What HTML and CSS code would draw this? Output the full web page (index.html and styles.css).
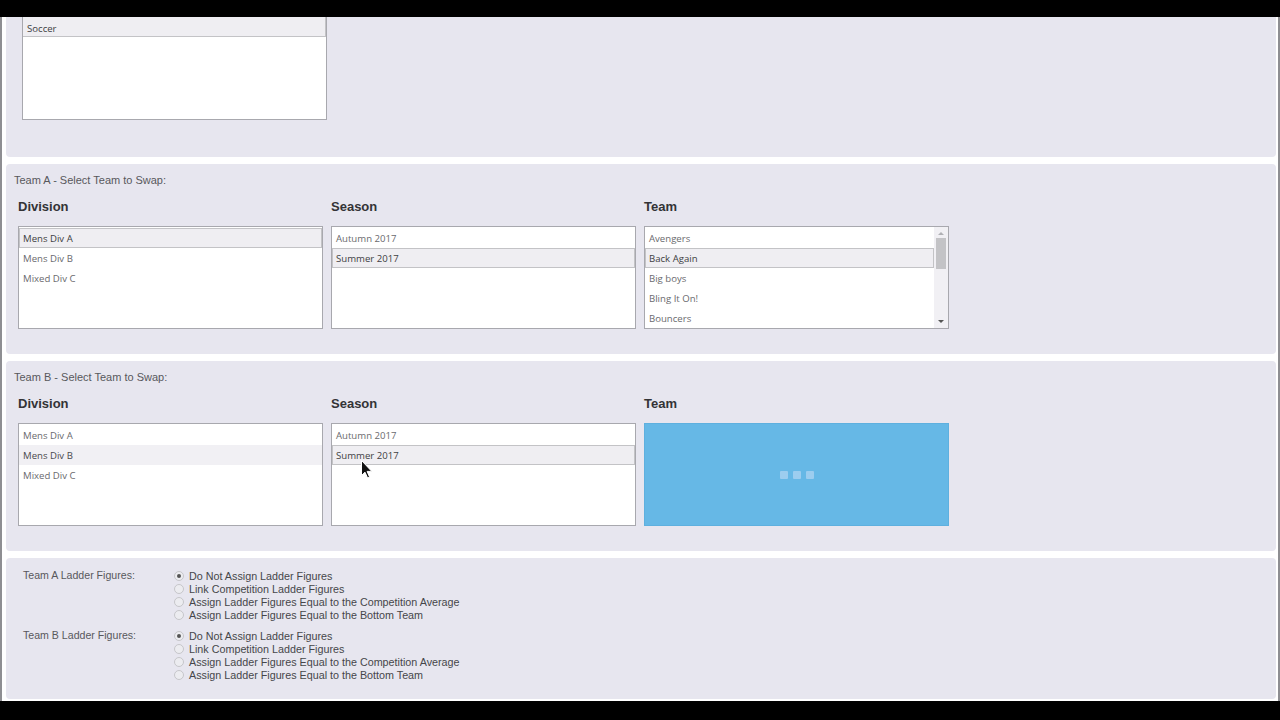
FILE: index.html
```html
<!DOCTYPE html>
<html>
<head>
<meta charset="utf-8">
<link rel="stylesheet" href="styles.css">
</head>
<body>
<div class="topbar"></div>
<div class="frame">
  <section class="panel p-sport">
    <div class="listbox lb-sport">
      <div class="item sel">Soccer</div>
    </div>
  </section>

  <section class="panel p-swap">
    <div class="label">Team A - Select Team to Swap:</div>
    <div class="cols">
      <div class="col">
        <h3>Division</h3>
        <div class="listbox">
          <div class="item sel">Mens Div A</div>
          <div class="item">Mens Div B</div>
          <div class="item">Mixed Div C</div>
        </div>
      </div>
      <div class="col">
        <h3>Season</h3>
        <div class="listbox">
          <div class="item">Autumn 2017</div>
          <div class="item sel">Summer 2017</div>
        </div>
      </div>
      <div class="col">
        <h3>Team</h3>
        <div class="listbox scroll">
          <div class="items">
            <div class="item">Avengers</div>
            <div class="item sel">Back Again</div>
            <div class="item">Big boys</div>
            <div class="item">Bling It On!</div>
            <div class="item">Bouncers</div>
          </div>
          <div class="scrollbar">
            <span class="arrow up"></span>
            <span class="thumb"></span>
            <span class="arrow down"></span>
          </div>
        </div>
      </div>
    </div>
  </section>

  <section class="panel p-swap">
    <div class="label">Team B - Select Team to Swap:</div>
    <div class="cols">
      <div class="col">
        <h3>Division</h3>
        <div class="listbox">
          <div class="item">Mens Div A</div>
          <div class="item hover">Mens Div B</div>
          <div class="item">Mixed Div C</div>
        </div>
      </div>
      <div class="col">
        <h3>Season</h3>
        <div class="listbox cursor-host">
          <div class="item">Autumn 2017</div>
          <div class="item sel">Summer 2017</div>
          <svg class="cursor" width="12" height="19" viewBox="0 0 12 19"><path d="M0.5 0.5 L0.5 15.5 L4 12.2 L6.6 18 L8.6 17.1 L6.1 11.4 L10.8 11.4 Z" fill="#111" stroke="#fff" stroke-width="1"/></svg>
        </div>
      </div>
      <div class="col">
        <h3>Team</h3>
        <div class="loading">
          <span class="dot"></span><span class="dot"></span><span class="dot"></span>
        </div>
      </div>
    </div>
  </section>

  <section class="panel p-ladder">
    <div class="ladder-row">
      <div class="ladder-label">Team A Ladder Figures:</div>
      <div class="radios">
        <div class="radio"><span class="circle on"></span>Do Not Assign Ladder Figures</div>
        <div class="radio"><span class="circle"></span>Link Competition Ladder Figures</div>
        <div class="radio"><span class="circle"></span>Assign Ladder Figures Equal to the Competition Average</div>
        <div class="radio"><span class="circle"></span>Assign Ladder Figures Equal to the Bottom Team</div>
      </div>
    </div>
    <div class="ladder-row">
      <div class="ladder-label">Team B Ladder Figures:</div>
      <div class="radios">
        <div class="radio"><span class="circle on"></span>Do Not Assign Ladder Figures</div>
        <div class="radio"><span class="circle"></span>Link Competition Ladder Figures</div>
        <div class="radio"><span class="circle"></span>Assign Ladder Figures Equal to the Competition Average</div>
        <div class="radio"><span class="circle"></span>Assign Ladder Figures Equal to the Bottom Team</div>
      </div>
    </div>
  </section>
</div>
</body>
</html>
```

FILE: styles.css
```css
* { box-sizing: border-box; }
html, body {
  margin: 0;
  padding: 0;
  height: 720px;
  overflow: hidden;
  background: #000;
  font-family: "Liberation Sans", Arial, sans-serif;
}
.topbar { height: 17px; background: #000; }
.frame {
  background: #fff;
  border-left: 2px solid #8e8e92;
  border-right: 2px solid #8e8e92;
  padding: 0 2px 2px 4px;
  display: flex;
  flex-direction: column;
  gap: 7px;
}
.panel {
  background: #e7e6ef;
  border-radius: 4px;
}
.p-sport {
  height: 140px;
  padding-left: 16px;
  border-radius: 0 0 4px 4px;
}
.listbox {
  background: #fff;
  border: 1px solid #a8a8ae;
  height: 103px;
  width: 305px;
  padding-top: 1px;
  position: relative;
}
.lb-sport {
  border-top: none;
  padding-top: 0;
}
.item {
  height: 20px;
  line-height: 19px;
  padding-left: 3px;
  font-family: "Open Sans", "Noto Sans", sans-serif;
  font-size: 9.6px;
  color: #6a6a6e;
  border: 1px solid transparent;
}
.item.sel {
  background: #efeef2;
  border-color: #c3c3c6;
  color: #3e3e42;
}
.item.hover {
  background: #f1f0f4;
  color: #4a4a4e;
}
.lb-sport .item.sel {
  border-top: none;
  border-left: none;
  padding-top: 5px;
  line-height: 14px;
  padding-left: 4px;
}
.p-swap {
  height: 190px;
  padding: 9px 0 0 8px;
}
.label {
  font-size: 11px;
  line-height: 14px;
  color: #58585c;
}
.cols {
  margin-top: 12px;
  padding-left: 4px;
  display: grid;
  grid-template-columns: 305px 305px 305px;
  column-gap: 8px;
}
.col h3 {
  margin: 0 0 11px 0;
  font-size: 13px;
  line-height: 16px;
  font-weight: bold;
  color: #333336;
}
.listbox.scroll {
  display: flex;
  padding-top: 0;
}
.listbox.scroll .items {
  flex: 1;
  padding-top: 1px;
}
.scrollbar {
  width: 14px;
  background: #f1f0f4;
  display: flex;
  flex-direction: column;
  align-items: center;
  padding-top: 5px;
}
.thumb {
  width: 10px;
  height: 31px;
  background: #c3c3c6;
  margin-top: 3px;
}
.arrow {
  width: 0;
  height: 0;
  border-left: 3px solid transparent;
  border-right: 3px solid transparent;
}
.arrow.up { border-bottom: 3px solid #b0b0b4; }
.arrow.down {
  border-top: 3px solid #555;
  margin-top: auto;
  margin-bottom: 5px;
}
.loading {
  height: 103px;
  width: 305px;
  background: #66b8e6;
  border: 1px solid #5eb0df;
  display: flex;
  align-items: center;
  justify-content: center;
  gap: 5px;
}
.dot {
  width: 8px;
  height: 8px;
  border-radius: 1px;
  background: #9ccdef;
}
.cursor {
  position: absolute;
  left: 29px;
  top: 36px;
}
.p-ladder {
  padding: 11px 0 18px 17px;
  display: flex;
  flex-direction: column;
  gap: 8px;
  flex: 1;
}
.ladder-row {
  display: flex;
}
.ladder-label {
  width: 151px;
  font-size: 10.6px;
  line-height: 12px;
  color: #58585c;
}
.radio {
  display: flex;
  align-items: center;
  height: 13px;
  font-size: 10.75px;
  color: #46464a;
}
.circle {
  width: 10px;
  height: 10px;
  border-radius: 50%;
  border: 1px solid #c6c6ca;
  background: #ececf0;
  margin-right: 5px;
  position: relative;
}
.circle.on::after {
  content: "";
  position: absolute;
  left: 2px;
  top: 2px;
  width: 4px;
  height: 4px;
  border-radius: 50%;
  background: #555;
}
```
